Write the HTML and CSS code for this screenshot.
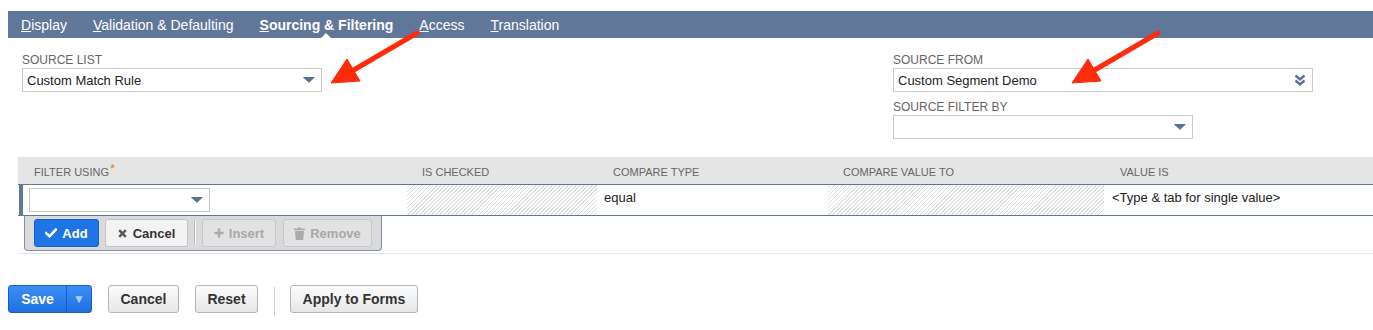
FILE: index.html
```html
<!DOCTYPE html>
<html>
<head>
<meta charset="utf-8">
<link rel="stylesheet" href="styles.css">
</head>
<body>
<nav class="tabs">
  <span class="tab"><u>D</u>isplay</span>
  <span class="tab"><u>V</u>alidation &amp; Defaulting</span>
  <span class="tab active"><u>S</u>ourcing &amp; Filtering</span>
  <span class="tab"><u>A</u>ccess</span>
  <span class="tab"><u>T</u>ranslation</span>
</nav>

<section class="fields">
  <div class="col">
    <div class="field">
      <label class="lbl">SOURCE LIST</label>
      <div class="select w300"><span>Custom Match Rule</span>
        <svg class="caret" width="12" height="6" viewBox="0 0 12 6"><path d="M0 0.5 Q0 0 0.6 0 H11.4 Q12 0 11.6 0.5 L6.4 5.6 Q6 6 5.6 5.6 Z"/></svg>
      </div>
    </div>
  </div>
  <div class="col">
    <div class="field">
      <label class="lbl">SOURCE FROM</label>
      <div class="select w420"><span>Custom Segment Demo</span>
        <svg class="dbl" width="12" height="12" viewBox="0 0 12 12"><path d="M1.5 1.5 L6 5.5 L10.5 1.5 M1.5 6.5 L6 10.5 L10.5 6.5"/></svg>
      </div>
    </div>
    <div class="field gap">
      <label class="lbl">SOURCE FILTER BY</label>
      <div class="select w300"><span></span>
        <svg class="caret" width="12" height="6" viewBox="0 0 12 6"><path d="M0 0.5 Q0 0 0.6 0 H11.4 Q12 0 11.6 0.5 L6.4 5.6 Q6 6 5.6 5.6 Z"/></svg>
      </div>
    </div>
  </div>
</section>

<section class="grid">
  <div class="ghead">
    <div class="hc">FILTER USING<span class="req">*</span></div>
    <div class="hc">IS CHECKED</div>
    <div class="hc">COMPARE TYPE</div>
    <div class="hc">COMPARE VALUE TO</div>
    <div class="hc">VALUE IS</div>
  </div>
  <div class="grow">
    <div class="rc first">
      <div class="select w181"><span></span>
        <svg class="caret" width="12" height="6" viewBox="0 0 12 6"><path d="M0 0.5 Q0 0 0.6 0 H11.4 Q12 0 11.6 0.5 L6.4 5.6 Q6 6 5.6 5.6 Z"/></svg>
      </div>
    </div>
    <div class="rc hatch"></div>
    <div class="rc txt">equal</div>
    <div class="rc hatch"></div>
    <div class="rc txt val">&lt;Type &amp; tab for single value&gt;</div>
  </div>
  <div class="rowbar">
    <button class="rb add"><svg width="12" height="10" viewBox="0 0 12 10"><path d="M1.2 5.2 L4.5 8.3 L10.8 1.6"/></svg>Add</button>
    <button class="rb cancel"><svg width="9" height="9" viewBox="0 0 9 9"><path d="M1.2 1.2 L7.8 7.8 M7.8 1.2 L1.2 7.8"/></svg>Cancel</button>
    <span class="rsep"></span>
    <button class="rb dis ins"><svg width="10" height="10" viewBox="0 0 10 10"><path d="M5 0.5 V9.5 M0.5 5 H9.5"/></svg>Insert</button>
    <button class="rb dis rem"><svg width="11" height="13" viewBox="0 0 11 13"><path class="fill" d="M0 1.5 H4 V0.5 H7 V1.5 H11 V3.2 H0 Z M1 4 H10 L9.2 13 H1.8 Z"/></svg>Remove</button>
  </div>
</section>

<section class="actions">
  <div class="save"><span class="save-main">Save</span><span class="save-arrow">▼</span></div>
  <button class="btn">Cancel</button>
  <button class="btn">Reset</button>
  <span class="asep"></span>
  <button class="btn">Apply to Forms</button>
</section>

<svg class="annot" width="1373" height="330" viewBox="0 0 1373 330">
  <line x1="417" y1="33" x2="352" y2="71"/>
  <polygon points="331,83 347,59 360,81"/>
  <line x1="1158" y1="33" x2="1093" y2="71"/>
  <polygon points="1072,83 1088,59 1101,81"/>
</svg>
</body>
</html>
```

FILE: styles.css
```css
* { box-sizing: border-box; }
html, body { margin: 0; }
body {
  position: relative;
  width: 1373px;
  height: 330px;
  overflow: hidden;
  padding: 11px 0 0 8px;
  background: #fff;
  color: #222;
  font-family: "Liberation Sans", Arial, sans-serif;
}

/* tabs */
.tabs {
  display: flex;
  height: 27px;
  background: #607799;
}
.tab {
  position: relative;
  padding: 1px 13px 0;
  line-height: 26px;
  font-size: 14px;
  color: #fff;
  white-space: nowrap;
}
.tab.active { font-weight: bold; }
.tab.active::after {
  content: "";
  position: absolute;
  left: 50%;
  bottom: 0;
  margin-left: -5px;
  border-left: 5px solid transparent;
  border-right: 5px solid transparent;
  border-bottom: 5px solid #fff;
}

/* fields */
.fields {
  display: grid;
  grid-template-columns: 871px 1fr;
  padding: 15px 0 0 14px;
}
.lbl {
  display: block;
  font-size: 12px;
  line-height: 15px;
  padding-top: 1px;
  margin-top: -1px;
  color: #666;
}
.field.gap { margin-top: 8px; }
.select {
  display: flex;
  align-items: center;
  justify-content: space-between;
  height: 24px;
  border: 1px solid #c9c9c9;
  background: #fff;
  padding: 0 6px 0 4px;
  font-size: 13px;
  color: #222;
}
.w300 { width: 300px; }
.w420 { width: 420px; }
.w181 { width: 181px; }
.caret path { fill: #5b7396; }
.dbl path { fill: none; stroke: #5b7396; stroke-width: 2.4; }

/* grid */
.grid {
  margin: 18px 0 0 10px;
  padding-bottom: 2px;
  border-bottom: 1px solid #e8e8e8;
}
.ghead, .grow {
  display: grid;
  grid-template-columns: 388px 191px 230px 277px 1fr;
}
.ghead {
  height: 27px;
  background: #e5e5e5;
  align-items: center;
  padding-top: 2px;
  font-size: 11px;
  color: #666;
}
.hc { padding-left: 16px; white-space: nowrap; }
.hc:nth-child(2), .hc:nth-child(3), .hc:nth-child(4) { padding-left: 16px; }
.req {
  color: #d88a1a;
  font-size: 13px;
  position: relative;
  top: -3px;
  margin-left: 1px;
}
.grow {
  height: 32px;
  border-top: 1px solid #607799;
  border-bottom: 1px solid #607799;
  background: #fff;
}
.rc { border-left: 1px solid #fff; }
.rc.first {
  margin-left: 1px;
  border-left: 4px solid #607799;
  padding: 3px 0 0 6px;
}
.hatch {
  background: repeating-linear-gradient(135deg, #fff 0 1.6px, #e0e0e0 1.6px 2.8px);
}
.txt {
  font-size: 13px;
  color: #222;
  padding: 5px 0 0 6px;
}
.txt.val { padding-left: 7px; }

.rowbar {
  display: flex;
  align-items: flex-start;
  gap: 6px;
  width: 358px;
  height: 35px;
  margin-left: 6px;
  padding: 3px 0 0 9px;
  background: #dadada;
  border: 1px solid #7f90ab;
  border-top: 0;
  border-radius: 0 0 4px 4px;
}
.rb {
  display: flex;
  align-items: center;
  justify-content: center;
  gap: 5px;
  height: 28px;
  padding: 0;
  border-radius: 3px;
  font-family: "Liberation Sans", Arial, sans-serif;
  font-size: 13px;
  font-weight: bold;
}
.rb.add {
  width: 65px;
  background: #1f75e6;
  border: 1px solid #1760c4;
  color: #fff;
}
.rb.add path { fill: none; stroke: #fff; stroke-width: 2.6; stroke-linecap: square; }
.rb.cancel {
  width: 83px;
  background: #f3f3f3;
  border: 1px solid #c3c3c3;
  color: #333;
  gap: 6px;
}
.rb.cancel path { fill: none; stroke: #555; stroke-width: 2.4; }
.rb.dis {
  background: #e2e2e2;
  border: 1px solid #c7c7c7;
  color: #a8a8a8;
}
.rb.ins { width: 74px; }
.rb.rem { width: 89px; margin-left: 1px; }
.rb.dis path { fill: none; stroke: #ababab; stroke-width: 2.6; }
.rb.dis path.fill { fill: #ababab; stroke: none; }
.rsep {
  width: 2px;
  height: 24px;
  margin: 2px 0 0;
  border-left: 1px solid #b8b8b8;
  border-right: 1px solid #fff;
}

/* actions */
.actions {
  display: flex;
  align-items: flex-start;
  gap: 16px;
  margin-top: 31px;
}
.save {
  display: flex;
  height: 28px;
  border: 1px solid #1a5cbd;
  border-radius: 3px;
  background: linear-gradient(#3b8ff5, #1f6fe2);
  color: #fff;
  font-size: 14px;
  font-weight: bold;
}
.save-main {
  width: 57px;
  line-height: 26px;
  text-align: center;
}
.save-arrow {
  width: 25px;
  line-height: 26px;
  text-align: center;
  border-left: 1px solid #1a5cbd;
  color: #b3cdf3;
  font-size: 12px;
  font-weight: normal;
}
.btn {
  height: 28px;
  padding: 0 11.5px;
  border: 1px solid #b6b6b6;
  border-radius: 3px;
  background: linear-gradient(#fbfbfb, #e7e7e7);
  color: #333;
  font-family: "Liberation Sans", Arial, sans-serif;
  font-size: 14px;
  font-weight: bold;
}
.asep {
  width: 1px;
  height: 29px;
  margin: 2px -1px 0 0;
  background: #cfcfcf;
}

/* annotation arrows */
.annot {
  position: absolute;
  top: 0;
  left: 0;
  pointer-events: none;
}
.annot line { stroke: #fe2c0c; stroke-width: 5; stroke-linecap: round; }
.annot polygon { fill: #fe2c0c; stroke: #fe2c0c; stroke-width: 1; stroke-linejoin: round; }
```
